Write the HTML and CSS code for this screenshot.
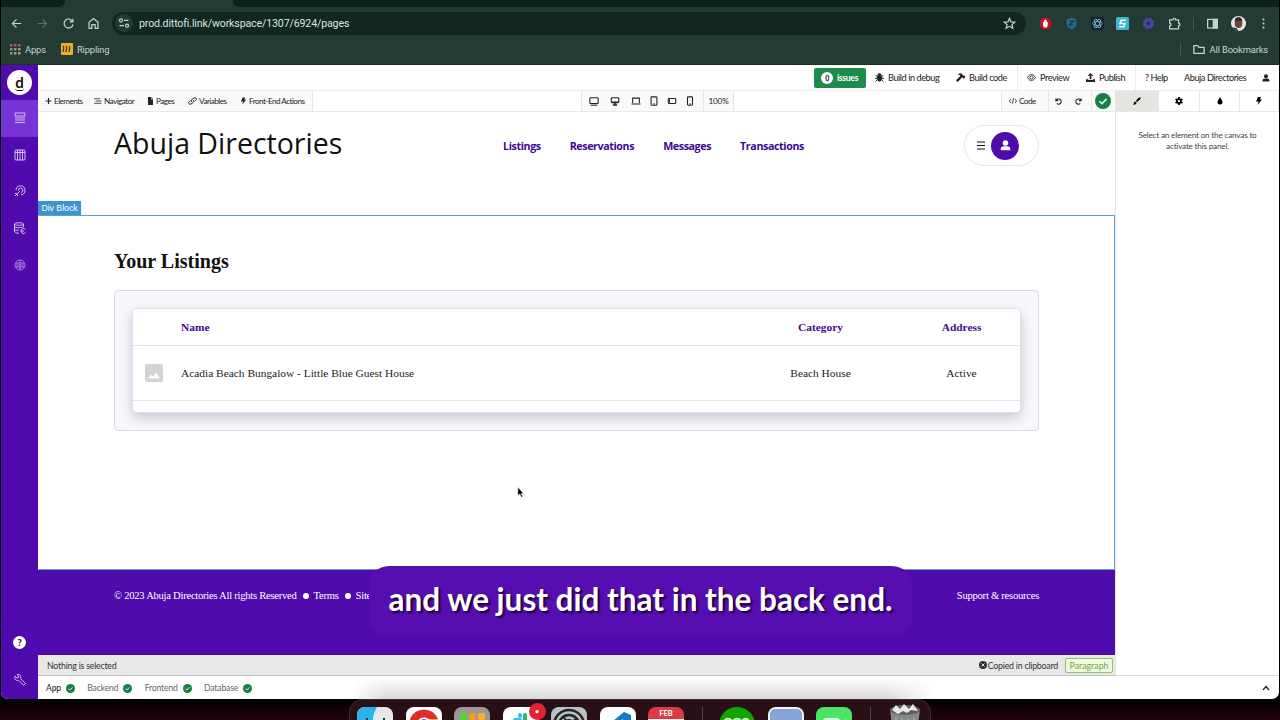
FILE: index.html
```html
<!DOCTYPE html>
<html lang="en">
<head>
    <meta charset="UTF-8">
    <meta name="viewport" content="width=device-width, initial-scale=1.0">
    <title>Abuja Directories</title>
    <link rel="stylesheet" href="styles.css">
</head>
<body>
    <svg class="sprite">
        <symbol id="check" viewBox="0 0 16 16"><circle cx="8" cy="8" r="8" fill="#178046"/><path d="M4.5 8.2l2.5 2.5 4.5-4.8" fill="none" stroke="#fff" stroke-width="1.5"/></symbol>
        <symbol id="user" viewBox="0 0 16 16"><circle cx="8" cy="4.4" r="4"/><path d="M1 15v-1.500a4.500 4.500 0 0 1 4.500-4.300h5a4.500 4.500 0 0 1 4.500 4.300V15z"/></symbol>
        <symbol id="bolt" viewBox="0 0 16 16"><path d="M6 0h6l-2 5h4L5 16l2-7H2z"/></symbol>
        <symbol id="undo" viewBox="0 0 16 16"><path d="M2 1v5h5M2.500 6A6 6 0 1 1 4 12.500" fill="none" stroke="currentColor" stroke-width="2.400"/></symbol>
    </svg>

    <div class="window">
        <div class="tabstrip"><div class="tab"></div><div class="tab-end"></div></div>

        <div class="toolbar">
            <svg viewBox="0 0 16 16" class="line"><path d="M14 8H3M8 3L3 8l5 5"/></svg>
            <svg viewBox="0 0 16 16" class="line dim"><path d="M2 8h11M8 3l5 5-5 5"/></svg>
            <svg viewBox="0 0 16 16" class="line"><path d="M13 5.500A5.500 5.500 0 1 0 13.500 9M13.500 2v4h-4"/></svg>
            <svg viewBox="0 0 16 16" class="line"><path d="M2.500 14V6.500L8 2l5.500 4.500V14H10V9.500H6V14z"/></svg>
            <div class="omnibox">
                <span class="site-info"><svg viewBox="0 0 16 16" class="line"><circle cx="4" cy="4.500" r="2"/><path d="M8 4.500h6M2 11.500h6"/><circle cx="12" cy="11.500" r="2"/></svg></span>
                <span class="url">prod.dittofi.link/workspace/1307/6924/pages</span>
                <svg viewBox="0 0 16 16" class="line star"><path d="M8 1.800l1.900 4.200 4.600.4-3.500 3 1.100 4.500L8 11.500l-4.100 2.400L5 9.400l-3.500-3 4.600-.4z"/></svg>
            </div>
            <svg viewBox="0 0 16 16"><path d="M5 1h6l4 4v6l-4 4H5l-4-4V5z" fill="#cb1022"/><path d="M5 6h1V4h1.200V3h1.300v1h1.200v2h1v4c0 4-5.700 4-5.700 0z" fill="#fff"/></svg>
            <svg viewBox="0 0 16 16"><path d="M8 1l6 2v5c0 4-3 6-6 7-3-1-6-3-6-7V3z" fill="#206e98"/><path d="M5 5h6L5 10h5" fill="none" stroke="#1d3c42" stroke-width="1.500"/></svg>
            <svg viewBox="0 0 16 16"><rect width="16" height="16" rx="3" fill="#13212b"/><g fill="none" stroke="#80c3dc"><ellipse cx="8" cy="8" rx="6" ry="2.500"/><ellipse cx="8" cy="8" rx="6" ry="2.500" transform="rotate(60 8 8)"/><ellipse cx="8" cy="8" rx="6" ry="2.500" transform="rotate(120 8 8)"/></g></svg>
            <svg viewBox="0 0 16 16"><rect width="16" height="16" rx="2" fill="#39bad0"/><path d="M12 4H6.500L5 8h6l-1.500 4H4" fill="none" stroke="#fff" stroke-width="2"/></svg>
            <svg viewBox="0 0 16 16"><circle cx="8" cy="8" r="5" fill="none" stroke="#5342bd" stroke-width="4" stroke-dasharray="2.900 1"/><circle cx="8" cy="8" r="4" fill="none" stroke="#5342bd" stroke-width="2"/></svg>
            <svg viewBox="0 0 16 16" class="line"><path d="M2 3.500h4a1.700 1.700 0 0 1 3.400 0h3.600v4a1.700 1.700 0 0 1 0 3.400v3.600H2v-3.600a1.700 1.700 0 0 0 0-3.400z"/></svg>
            <i class="bar-line"></i>
            <svg viewBox="0 0 16 16" class="line"><rect x="2" y="3" width="12" height="10.500"/><path d="M9 3h5v10.500H9z" fill="#c3d5ce"/></svg>
            <svg viewBox="0 0 16 16" class="face"><circle cx="8" cy="8" r="8" fill="#e6e7e5"/><path d="M4 5c0-5 8-5 8 0v4c0 5-8 5-8 0z" fill="#704438"/><path d="M4 5c0-5 8-5 8 0z" fill="#352b2a"/><path d="M1 12l5 1 2 3c-4 0-6-2-7-4z" fill="#273b43"/></svg>
            <svg viewBox="0 0 16 16"><g fill="#c3d5ce"><circle cx="8" cy="3" r="1.300"/><circle cx="8" cy="8" r="1.300"/><circle cx="8" cy="13" r="1.300"/></g></svg>
        </div>

        <div class="bookmarks">
            <svg viewBox="0 0 11 11"><g fill="#b75b50"><path d="M0 0h2.500v2.500H0zM4 0h2.500v2.500H4zM8 0h2.500v2.500H8z"/></g><g fill="#79a56c"><path d="M0 4h2.500v2.500H0z"/></g><path d="M4 4h2.500v2.500H4z" fill="#6b9dc7"/><path d="M8 4h2.500v2.500H8zM8 8h2.500v2.500H8zM4 8h2.500v2.500H4z" fill="#b99c59"/><path d="M0 8h2.500v2.500H0z" fill="#79a56c"/></svg>
            <span>Apps</span>
            <svg viewBox="0 0 12 12" class="rippling"><rect width="12" height="12" rx="1" fill="#e9ae2c"/><path d="M2 3c2 2 0 4 0 6M5 3c2 2 0 4 0 6M8 3c2 2 0 4 0 6" fill="none" stroke="#4b3512" stroke-width="1.300"/></svg>
            <span>Rippling</span>
            <i class="bar-line"></i>
            <svg viewBox="0 0 14 12" class="line folder"><path d="M1 10.500v-9h4.500l1.500 2h6v7z"/></svg>
            <span class="all">All Bookmarks</span>
        </div>

        <div class="app">
            <div class="sidebar">
                <div class="logo"><span>d</span></div>
                <div class="side-item active"><svg viewBox="0 0 12 12"><path d="M1 1h10v3H1zM1 6h10M1 8h10M1 10.500h10"/></svg></div>
                <div class="side-item"><svg viewBox="0 0 12 12"><rect x="1" y="1" width="10" height="10" rx="1"/><path d="M1 3.500h10M3.500 1v10M6 1v10M8.500 1v10"/></svg></div>
                <div class="side-item"><svg viewBox="0 0 12 12"><path d="M2 5a4.500 4.500 0 1 1 5 4.800M4.500 5.500a2.200 2.200 0 1 1 2.500 2M6 6L1 11M1 8l3 3M2.500 8l1 1.500"/></svg></div>
                <div class="side-item"><svg viewBox="0 0 12 12"><ellipse cx="5" cy="2" rx="4.500" ry="1.300"/><path d="M.5 2v8c1 1 3 1.300 4.500 1M.5 4.700c1 1.300 7 1.300 9 0V2M.5 7.500C2 8.500 4 8.500 5 8M11.500 7.500a2.500 2.500 0 1 0 0 3M7 9h3"/></svg></div>
                <div class="side-item faint"><svg viewBox="0 0 12 12"><circle cx="6" cy="6" r="5"/><path d="M6 1v10M1.500 4h9M1.500 8h9M3 4v4M9 4v4M4 6h4"/></svg></div>
                <div class="side-help">?</div>
                <div class="side-item wrench"><svg viewBox="0 0 12 12"><path d="M1 2l2 2 1.500-.5L4.500 2 3 .6C6 0 7.500 2 6.500 4.500l5 5-1.700 1.800-5.300-5C2 7 0 5 1 2z"/></svg></div>
            </div>

            <div class="main">
                <div class="topbar">
                    <div class="issues"><b>0</b>issues</div>
                    <div class="item"><svg viewBox="0 0 16 16"><path d="M5 4a3 3 0 0 1 6 0zM1 4l3 2h8l3-2M0 9.500h16M1 15l3-3V6h8v6l3 3" fill="none" stroke="currentColor" stroke-width="1.600"/><path d="M4 5h8v6a4 4 0 0 1-8 0zM5 4a3 3 0 0 1 6 0z"/></svg>Build in debug</div>
                    <div class="item"><svg viewBox="0 0 16 16"><path d="M3 3.500C6 0 9 0 11 2l3 3 2 0v3l-2.500 2L11 7.500 3 16l-3-3 8-8C6.500 3.500 5 3 3 3.500z"/></svg>Build code</div>
                    <div class="item sep"><svg viewBox="0 0 16 16"><path d="M1 8c3-7 11-7 14 0-3 7-11 7-14 0z" fill="none" stroke="currentColor" stroke-width="1.500"/><circle cx="8" cy="8" r="3" fill="none" stroke="currentColor" stroke-width="1.500"/></svg>Preview</div>
                    <div class="item publish"><svg viewBox="0 0 16 16"><path d="M8 0l5 5H9.500v6h-3V5H3zM0 11h4v1.500h8V11h4v5H0z"/></svg>Publish</div>
                    <div class="item sep help">? Help</div>
                    <div class="item project">Abuja Directories</div>
                    <div class="item"><svg class="me"><use href="#user"/></svg></div>
                </div>

                <div class="work">
                    <div class="editor">
                        <div class="tools">
                            <div class="item"><svg viewBox="0 0 12 12"><path d="M6 1v10M1 6h10" stroke="currentColor" stroke-width="2"/></svg>Elements</div>
                            <div class="item"><svg viewBox="0 0 16 12" class="wide"><path d="M0 1.500h12M3 6h12M0 10.500h15" stroke="currentColor" stroke-width="1.600"/></svg>Navigator</div>
                            <div class="item"><svg viewBox="0 0 12 16"><path d="M1 0h6v5h4v11H1zM8 0l3 4H8z"/></svg>Pages</div>
                            <div class="item"><svg viewBox="0 0 20 16" class="wide link"><path d="M9 10c-3-2-1-5 1-6l3-2c4-2 7 3 3 5l-2 1M11 6c3 2 1 5-1 6l-3 2c-4 2-7-3-3-5l2-1" fill="none" stroke="currentColor" stroke-width="2"/></svg>Variables</div>
                            <div class="item"><svg><use href="#bolt"/></svg>Front-End Actions</div>
                            <div class="plain"></div>
                            <div class="devices">
                                <svg viewBox="0 0 12 12"><rect x="1" y="2" width="10" height="7" rx="1"/><path d="M2 11h8"/></svg>
                                <svg viewBox="0 0 12 12"><rect x="1.500" y="2" width="9" height="6" rx="1"/><path d="M2 7.500h8M6 8v2.500M3.500 10.800h5" stroke-width="1.800"/></svg>
                                <svg viewBox="0 0 12 12"><path d="M2 8.500V2.500h8v6M.5 9.500h11"/></svg>
                                <svg viewBox="0 0 12 12"><rect x="2.500" y="1" width="7" height="10" rx="1"/><path d="M5 9.500h2"/></svg>
                                <svg viewBox="0 0 12 12"><rect x="1.500" y="3" width="9" height="6" rx="1"/><path d="M3 4v4"/></svg>
                                <svg viewBox="0 0 12 12"><rect x="3" y="1" width="6" height="10" rx="1"/><path d="M5 9.500h2"/></svg>
                            </div>
                            <div class="zoom">100%</div>
                            <div class="plain"></div>
                            <div class="item view-code"><svg viewBox="0 0 20 14" class="wide"><path d="M5 2L1 7l4 5M15 2l4 5-4 5M12 0L8 14" fill="none" stroke="currentColor" stroke-width="2"/></svg>Code</div>
                            <div class="history"><svg><use href="#undo"/></svg><svg class="redo"><use href="#undo"/></svg></div>
                            <div class="saved"><svg><use href="#check"/></svg></div>
                        </div>

                        <div class="canvas">
                            <div class="site-header">
                                <div class="brand">Abuja Directories</div>
                                <div class="nav">
                                    <span>Listings</span>
                                    <span>Reservations</span>
                                    <span>Messages</span>
                                    <span>Transactions</span>
                                </div>
                                <div class="account">
                                    <svg viewBox="0 0 8 9"><path d="M0 1h8M0 4.500h8M0 8h8" stroke="#111" stroke-width="1.200"/></svg>
                                    <div class="avatar"><svg><use href="#user"/></svg></div>
                                </div>
                            </div>
                            <div class="section">
                                <div class="tag">Div Block</div>
                                <h2>Your Listings</h2>
                                <div class="panel">
                                    <div class="table">
                                        <div class="row head"><i></i><span>Name</span><span>Category</span><span>Address</span></div>
                                        <div class="row">
                                            <i><svg viewBox="0 0 18 18"><rect width="18" height="18" rx="2" fill="#d3d3d3"/><path d="M3 14.500l3-4 2 2 3-4 4 6z" fill="#fff"/></svg></i>
                                            <span>Acadia Beach Bungalow - Little Blue Guest House</span><span>Beach House</span><span>Active</span>
                                        </div>
                                    </div>
                                </div>
                            </div>
                            <div class="footer">
                                <span>© 2023 Abuja Directories All rights Reserved</span><i></i><span>Terms</span><i></i><span class="site">Site</span>
                                <span class="support">Support &amp; resources</span>
                            </div>
                        </div>

                        <div class="selection">
                            <span>Nothing is selected</span>
                            <svg viewBox="0 0 16 16"><circle cx="8" cy="8" r="8"/><path d="M5 5l6 6M11 5l-6 6" stroke="#eee" stroke-width="1.800"/></svg>
                            <span class="copied">Copied in clipboard</span>
                            <b>Paragraph</b>
                        </div>
                    </div>

                    <div class="inspector">
                        <div class="tabs">
                            <div class="on"><svg viewBox="0 0 16 16"><path d="M15 1c2 2-5 8-7 9L6 8c2-3 7-9 9-7zM5 9l2 2c0 4-4 5-7 4 2-1 1-5 5-6z"/></svg></div>
                            <div><svg viewBox="0 0 16 16"><path d="M8 0v16M1 4l14 8M15 4L1 12" stroke="currentColor" stroke-width="3.500"/><circle cx="8" cy="8" r="4" fill="#fff" stroke="currentColor" stroke-width="3.500"/></svg></div>
                            <div><svg viewBox="0 0 16 16"><path d="M8 0c1 4 5 6 5 10a5 5 0 0 1-10 0c0-4 4-6 5-10z"/></svg></div>
                            <div><svg><use href="#bolt"/></svg></div>
                        </div>
                        <p>Select an element on the canvas to<br>activate this panel.</p>
                    </div>
                </div>

                <div class="status">
                    <span class="current">App</span><svg><use href="#check"/></svg>
                    <span>Backend</span><svg><use href="#check"/></svg>
                    <span>Frontend</span><svg><use href="#check"/></svg>
                    <span>Database</span><svg><use href="#check"/></svg>
                    <svg viewBox="0 0 8 6" class="up"><path d="M1 5l3-3.500L7 5" fill="none" stroke="#222" stroke-width="1.300"/></svg>
                    <div class="dock-shade"></div>
                </div>
            </div>
        </div>
    </div>

    <div class="dock">
        <svg viewBox="0 0 36 36"><rect width="36" height="36" rx="8" fill="#e4e8ea"/><path d="M8 0h12c-4 7-5 14-4 20h4v16H0V8a8 8 0 0 1 8-8z" fill="#2fb1e9"/><path d="M10 11v6M27 11v6" stroke="#17313f" stroke-width="2"/></svg>
        <svg viewBox="0 0 36 36"><rect width="36" height="36" rx="8" fill="#fff"/><circle cx="18" cy="18" r="15" fill="#f5c52d"/><path d="M4 12a15 15 0 0 1 28 0H18z" fill="#d9302c"/><path d="M4 12l7 12 5-12z" fill="#d9302c"/><circle cx="18" cy="18" r="7.500" fill="#fff"/><circle cx="18" cy="18" r="6" fill="#427eed"/></svg>
        <svg viewBox="0 0 36 36"><rect width="36" height="36" rx="8" fill="#9d9597"/><rect x="6" y="6" width="7" height="7" rx="2" fill="#50d731"/><rect x="15" y="6" width="7" height="7" rx="2" fill="#f59a24"/><rect x="24" y="6" width="7" height="7" rx="2" fill="#ffae2c"/></svg>
        <div class="slack">
            <svg viewBox="0 0 36 36"><rect width="36" height="36" rx="8" fill="#fff"/><path d="M12 13h5M17 8v1" stroke="#39bdea" stroke-width="4" stroke-linecap="round"/><path d="M22 8v8" stroke="#2eb67d" stroke-width="4" stroke-linecap="round"/></svg>
            <b>•</b>
        </div>
        <svg viewBox="0 0 36 36"><rect width="36" height="36" rx="8" fill="#b9c1c3"/><g fill="none" stroke="#22282a"><circle cx="18" cy="18" r="15" stroke-width="2.500"/><circle cx="18" cy="18" r="10" stroke-width="2.500"/><circle cx="18" cy="18" r="5" stroke-width="2"/><path d="M12 9l6 9 8-7" stroke-width="2"/></g></svg>
        <svg viewBox="0 0 36 36"><rect width="36" height="36" rx="8" fill="#fff"/><path d="M24 5l7 3v22l-7 2L8 19l3-3 12 9V12L11 21l-3-3z" fill="#1679c9"/></svg>
        <div class="calendar">FEB</div>
        <i></i>
        <svg viewBox="0 0 36 36"><circle cx="18" cy="18" r="18" fill="#10a500"/><path d="M5 14c2-3 6-3 8 0M14 14c2-3 6-3 8 0M23 14c2-3 5-3 7 0" stroke="#d8f4c8" stroke-width="2" fill="none"/></svg>
        <svg viewBox="0 0 36 36"><rect width="36" height="36" rx="8" fill="#f4f5f9"/><rect x="2" y="2" width="32" height="34" rx="5" fill="#87a4d7"/></svg>
        <svg viewBox="0 0 36 36"><rect width="36" height="36" rx="8" fill="#4be463"/><rect x="7" y="11" width="17" height="14" rx="3" fill="#e2ffe3"/><path d="M25 16l5-4v12l-5-3z" fill="#e2ffe3"/></svg>
        <i></i>
        <svg viewBox="0 0 36 36" class="trash"><path d="M3 2h30l-4 34H7z" fill="#85898a"/><ellipse cx="18" cy="3" rx="15" ry="5" fill="#5c6062"/><path d="M5 3l4-5 4 4 4-5 5 5 4-5 5 7-7-1-4 3-4-2-5 3z" fill="#e7e7e5"/><path d="M9 10v20M15 11v20M21 11v20M27 10v20" stroke="#a9adad"/></svg>
    </div>

    <svg class="cursor" viewBox="0 0 8 12"><path d="M1 0v9.500l2.200-1.900L5 11.500l1.500-.7-1.700-3.700h2.700z" fill="#000" stroke="#fff" stroke-width=".5"/></svg>
    <div class="caption"><span>and we just did that in the back end.</span></div>
</body>
</html>
```
FILE: styles.css
```css
* {
    box-sizing: border-box;
}

body {
    margin: 0;
    width: 1280px;
    height: 720px;
    overflow: hidden;
    position: relative;
    background: linear-gradient(#000 700px, #24030c 720px);
    font-family: "Lato", "Liberation Sans", sans-serif;
    font-size: 9px;
    color: #222;
}

svg {
    display: block;
    flex: none;
    fill: currentColor;
    overflow: visible;
}

.sprite {
    position: absolute;
    width: 0;
    height: 0;
}

.window {
    display: flex;
    flex-direction: column;
    width: 1278px;
    height: 699px;
    margin-left: 1px;
    border-radius: 0 0 7px 7px;
    overflow: hidden;
    background: #fff;
}

/* browser chrome */
.tabstrip {
    display: flex;
    height: 7px;
    background: #233b33;
}

.tabstrip::before {
    content: "";
    width: 64px;
    background: #0b211a;
    border-radius: 0 0 6px 0;
}

.tab {
    width: 168px;
}

.tab-end {
    flex: 1;
    background: #0b211a;
    border-radius: 0 0 0 6px;
}

.line {
    fill: none;
    stroke: #c3d5ce;
    stroke-width: 1.5;
}

.toolbar {
    display: grid;
    grid-template-columns: 31px 20px 32px 19px 932px 20px 32px 20px 30px 22px 30px 8px 30px 22px 29px;
    align-items: center;
    justify-items: center;
    height: 32px;
    background: #233b33;
}

.toolbar > svg {
    width: 13px;
    height: 13px;
}

.toolbar .face {
    width: 15px;
    height: 15px;
}

.toolbar .dim {
    stroke: #5f746c;
}

.omnibox {
    display: flex;
    align-items: center;
    width: 914px;
    height: 23px;
    padding: 0 10px 0 3px;
    border-radius: 12px;
    background: #11271f;
}

.site-info {
    display: flex;
    width: 18px;
    height: 18px;
    align-items: center;
    justify-content: center;
    border-radius: 50%;
    background: #243b33;
}

.site-info svg {
    width: 12px;
    height: 12px;
}

.url {
    flex: 1;
    margin-left: 6px;
    font-family: "Roboto", sans-serif;
    font-size: 10.6px;
    letter-spacing: -0.14px;
    color: #dbe5e1;
}

.star {
    width: 13px;
    height: 13px;
}

.bar-line {
    width: 1px;
    height: 13px;
    background: #445b52;
}

.bookmarks {
    display: flex;
    align-items: center;
    height: 26px;
    padding: 0 11px 5px 9px;
    background: #233b33;
    border-bottom: 1px solid #1b3029;
    font-family: "Roboto", sans-serif;
    font-size: 9.4px;
    letter-spacing: -0.15px;
    color: #c9d6d1;
}

.bookmarks svg {
    width: 11px;
    height: 11px;
    margin-right: 4px;
}

.bookmarks .rippling {
    width: 12px;
    height: 12px;
    margin-left: 15px;
}

.bookmarks .bar-line {
    margin: 0 12px 0 auto;
}

.bookmarks .folder {
    width: 12px;
    margin-right: 5px;
}

/* app shell */
.app {
    display: flex;
    flex: 1;
    min-height: 0;
}

.sidebar {
    display: flex;
    flex-direction: column;
    align-items: center;
    width: 37px;
    background: #4f0bad;
    color: #eadfff;
}

.logo {
    display: flex;
    align-items: center;
    justify-content: center;
    width: 25px;
    height: 25px;
    margin: 5px 0;
    border-radius: 50%;
    background: #fff;
    color: #111;
    font-size: 15px;
    font-weight: 700;
    line-height: 14px;
}

.logo span {
    height: 16px;
    border-bottom: 1.5px solid #111;
    border-radius: 0 0 3px 3px;
}

.side-item {
    display: flex;
    align-items: center;
    justify-content: center;
    width: 37px;
    height: 36.6px;
}

.side-item svg {
    width: 12px;
    height: 12px;
    fill: none;
    stroke: #e1cdfa;
    stroke-width: 0.9;
}

.side-item.active {
    background: #7633d5;
}

.side-item.faint {
    opacity: 0.65;
}

.side-help {
    width: 13px;
    height: 13px;
    margin-top: auto;
    border-radius: 50%;
    background: #fff;
    color: #222;
    font-size: 10px;
    font-weight: 900;
    line-height: 13px;
    text-align: center;
}

.wrench {
    height: 50px;
    padding-top: 12px;
}

.main {
    display: flex;
    flex-direction: column;
    width: 1241px;
}

.topbar {
    display: grid;
    grid-template-columns: 61px 81px 61px 61px 57px 42px 75px 20px;
    justify-content: end;
    align-items: center;
    height: 26px;
    padding-right: 7px;
    border-bottom: 1px solid #ececec;
    font-size: 9.2px;
    letter-spacing: -0.45px;
}

.item {
    display: flex;
    align-items: center;
    height: 18px;
    white-space: nowrap;
}

.topbar .item svg {
    width: 9px;
    height: 9px;
    margin-right: 4px;
}

.topbar .sep {
    height: 25px;
    padding-left: 9px;
    border-left: 1px solid #ececec;
}

.topbar .publish {
    padding-left: 8px;
}

.topbar .project {
    padding-left: 7px;
}

.topbar .item .me {
    width: 8px;
    height: 8px;
    margin-left: 10px;
}

.issues {
    display: flex;
    align-items: center;
    width: 52px;
    height: 20px;
    padding-left: 7px;
    border-radius: 2px;
    background: #1c8b4c;
    color: #fff;
    font-weight: 700;
    font-size: 8.7px;
    letter-spacing: -0.35px;
}

.issues b {
    width: 12px;
    height: 12px;
    margin-right: 4px;
    border-radius: 50%;
    background: #fff;
    color: #222;
    font-size: 7px;
    line-height: 12px;
    text-align: center;
}

.work {
    display: flex;
    height: 585px;
}

.editor {
    display: flex;
    flex-direction: column;
    width: 1077px;
}

.tools {
    display: grid;
    grid-template-columns: 49px 53px 40px 53px 79px 270px 121px 30px 269px 46px 43px 24px;
    align-items: center;
    height: 21px;
    border-bottom: 1px solid #e8e8e8;
    background: #fafafa;
    font-size: 8.2px;
    letter-spacing: -0.55px;
}

.tools .item {
    padding-left: 7px;
}

.tools .item svg {
    width: 7px;
    height: 8px;
    margin-right: 2px;
}

.tools .item .wide {
    width: 8px;
}

.tools .item .link {
    width: 11px;
    margin-right: 1px;
}

.plain,
.devices,
.zoom,
.history,
.saved,
.tools .view-code {
    height: 20px;
}

.plain {
    background: #fff;
    border-left: 1px solid #e6e6e6;
    border-right: 1px solid #e6e6e6;
}

.devices {
    display: grid;
    grid-template-columns: 20px 22px 20px 16px 20px 16px;
    align-items: center;
    justify-items: center;
    padding-left: 2px;
}

.devices svg {
    width: 10px;
    height: 10px;
    fill: none;
    stroke: #222;
    stroke-width: 1.3;
}

.zoom {
    border-left: 1px solid #e6e6e6;
    letter-spacing: -0.2px;
    text-align: center;
    line-height: 20px;
}

.history {
    display: flex;
    align-items: center;
    justify-content: space-between;
    padding: 0 9px 0 6px;
    border-left: 1px solid #e6e6e6;
}

.history svg {
    width: 7px;
    height: 7px;
}

.redo {
    transform: scaleX(-1);
}

.saved {
    display: flex;
    align-items: center;
    justify-content: center;
    padding-right: 2px;
    border-left: 1px solid #e6e6e6;
}

.saved svg {
    width: 16px;
    height: 16px;
}

/* page on the canvas */
.canvas {
    flex: 1;
    background: #fff;
}

.site-header {
    display: flex;
    height: 103px;
    padding: 13px 76px 0;
}

.brand {
    width: 389px;
    font-family: "Open Sans", sans-serif;
    font-size: 28.5px;
    line-height: 36px;
    color: #111;
}

.nav {
    display: flex;
    flex: 1;
    gap: 29px;
    font-family: "Open Sans", sans-serif;
    font-size: 10.7px;
    font-weight: 700;
    letter-spacing: -0.4px;
    line-height: 43px;
    color: #400794;
}

.account {
    display: flex;
    align-items: center;
    width: 75px;
    height: 41px;
    padding-left: 12px;
    border: 1px solid #e6e6ea;
    border-radius: 21px;
}

.account > svg {
    width: 8px;
    height: 9px;
}

.avatar {
    display: flex;
    align-items: center;
    justify-content: center;
    width: 28px;
    height: 28px;
    margin-left: 6px;
    border-radius: 50%;
    background: #4f0bab;
    color: #fff;
}

.avatar svg {
    width: 11px;
    height: 11px;
}

.section {
    position: relative;
    height: 355px;
    padding: 33px 75px 0;
    border: 1px solid #5a9fcd;
    border-left-color: #fff;
    font-family: "Liberation Serif", serif;
}

.tag {
    position: absolute;
    left: -1px;
    top: -15px;
    width: 43px;
    height: 14px;
    background: #3c93cf;
    color: #fff;
    font-family: "Liberation Sans", sans-serif;
    font-size: 8.7px;
    line-height: 14px;
    text-align: center;
}

.section h2 {
    margin: 0;
    font-size: 20px;
    line-height: 24px;
    color: #111;
}

.panel {
    width: 925px;
    height: 141px;
    margin-top: 17px;
    padding: 17px;
    border: 1px solid #dadae3;
    border-radius: 4px;
    background: #f7f7fc;
}

.table {
    height: 105px;
    border: 1px solid #dfdfe6;
    border-radius: 5px;
    background: #fff;
    box-shadow: 0 5px 12px rgba(40, 30, 70, 0.22);
}

.row {
    display: grid;
    grid-template-columns: 48px 1fr 165px 117px;
    align-items: center;
    height: 55px;
    border-bottom: 1px solid #e4e4e8;
    font-size: 11.4px;
    color: #222;
}

.row svg {
    width: 18px;
    height: 18px;
    margin-left: 12px;
}

.row span:nth-child(n+3) {
    text-align: center;
}

.head {
    height: 37px;
    font-weight: 700;
    color: #430899;
}

.footer {
    display: flex;
    align-items: flex-start;
    height: 85px;
    padding: 19px 76px 0;
    background: #4f0bab;
    color: #fff;
    font-family: "Liberation Serif", serif;
    font-size: 10.6px;
    letter-spacing: -0.26px;
    line-height: 14px;
}

.footer i {
    width: 6px;
    height: 6px;
    margin: 4px 5px 0 6px;
    border-radius: 50%;
    background: #fff;
}

.footer .site {
    width: 14px;
    overflow: hidden;
}

.support {
    margin-left: auto;
}

.selection {
    display: flex;
    align-items: center;
    height: 21px;
    padding: 0 2px 0 9px;
    background: #e8e8e8;
    border-bottom: 1px solid #c3c3c3;
    font-size: 8.8px;
    letter-spacing: -0.22px;
    color: #333;
}

.selection svg {
    width: 8px;
    height: 8px;
    margin: 0 1px 0 auto;
}

.selection b {
    width: 48px;
    height: 15px;
    margin-left: 7px;
    border: 1px solid #8fc463;
    border-radius: 2px;
    background: #f0fae3;
    color: #70a83f;
    font-weight: 400;
    letter-spacing: 0;
    line-height: 13px;
    text-align: center;
}

.inspector {
    width: 164px;
    border-left: 1px solid #e5e5e5;
    border-bottom: 1px solid #dcdcdc;
    text-align: center;
}

.tabs {
    display: grid;
    grid-template-columns: 43px 41px 40px 39px;
    height: 21px;
    border-bottom: 1px solid #e8e8e8;
}

.tabs div {
    display: flex;
    align-items: center;
    justify-content: center;
    border-right: 1px solid #e8e8e8;
    color: #000;
}

.tabs .on {
    background: #e6e4e1;
}

.tabs svg {
    width: 8px;
    height: 8px;
}

.inspector p {
    margin: 18px 0 0;
    font-size: 8.2px;
    letter-spacing: -0.2px;
    line-height: 11px;
    color: #444;
}

.status {
    display: flex;
    position: relative;
    align-items: center;
    height: 23px;
    padding: 1px 9px 0 8px;
    font-size: 8.6px;
    letter-spacing: -0.15px;
    color: #666;
}

.status svg {
    width: 9px;
    height: 9px;
    margin: 0 12.5px 0 4.8px;
}

.status .current {
    color: #222;
}

.status .up {
    width: 8px;
    height: 6px;
    margin: 0 0 0 auto;
}

.dock-shade {
    position: absolute;
    left: 312px;
    top: 1px;
    width: 584px;
    height: 22px;
    background: linear-gradient(rgba(20, 30, 20, 0), rgba(20, 30, 20, 0.16));
    mask-image: linear-gradient(90deg, transparent, #000 35px, #000 540px, transparent);
}

/* dock */
.dock {
    display: flex;
    gap: 12.5px;
    width: 582px;
    height: 21px;
    margin-left: 349px;
    padding: 7px 7px 0;
    border: 1px solid #3f2930;
    border-bottom: 0;
    border-radius: 14px 14px 0 0;
    background: #281016;
    overflow: hidden;
}

.dock svg {
    width: 36px;
    height: 36px;
}

.dock > i {
    width: 1px;
    height: 40px;
    margin: 0 4px 0 5px;
    background: #594148;
}

.slack {
    position: relative;
}

.slack b {
    position: absolute;
    right: -7px;
    top: -4px;
    width: 17px;
    height: 17px;
    border-radius: 50%;
    background: #e02332;
    color: #fff;
    font-size: 7px;
    line-height: 17px;
    text-align: center;
}

.calendar {
    width: 36px;
    height: 36px;
    border-radius: 8px;
    background: linear-gradient(#d93c43 12px, #fff 12px);
    color: #fff;
    font-size: 7.5px;
    font-weight: 700;
    line-height: 14px;
    text-align: center;
}

/* overlays */
.cursor {
    position: absolute;
    left: 517px;
    top: 487px;
    width: 7px;
    height: 11px;
}

.caption {
    position: absolute;
    left: 369px;
    top: 566px;
    width: 543px;
    height: 70px;
    border-radius: 20px;
    background: #570eb1;
    color: #fff;
    font-size: 31.5px;
    font-weight: 700;
    line-height: 66px;
    text-align: center;
    text-shadow: 2px 2px 2px #160034;
    white-space: nowrap;
}
```
